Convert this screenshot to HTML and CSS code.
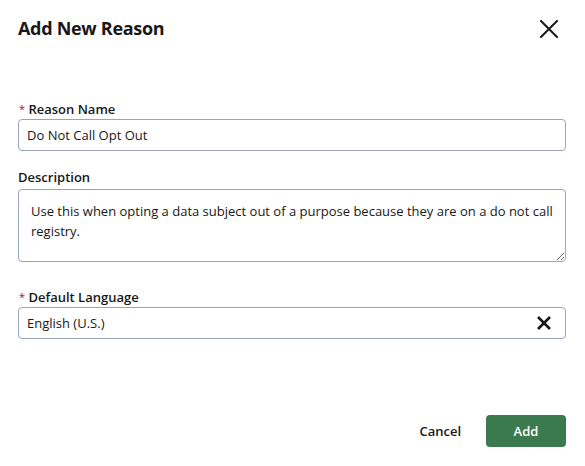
FILE: index.html
```html
<!DOCTYPE html>
<html lang="en">
<head>
<meta charset="utf-8">
<title>Add New Reason</title>
<link rel="stylesheet" href="styles.css">
</head>
<body>
<div class="modal">
  <header class="modal-header">
    <h1 class="modal-title">Add New Reason</h1>
    <button class="close-btn" type="button" aria-label="Close">
      <svg width="18" height="18" viewBox="0 0 18 18"><path d="M1 1L17 17M17 1L1 17" stroke="#181818" stroke-width="2" stroke-linecap="square" fill="none"/></svg>
    </button>
  </header>
  <form class="modal-body">
    <div class="field field-first">
      <label class="field-label"><abbr class="req">*</abbr> Reason Name</label>
      <div class="input-box">Do Not Call Opt Out</div>
    </div>
    <div class="field">
      <label class="field-label">Description</label>
      <textarea class="textarea">Use this when opting a data subject out of a purpose because they are on a do not call registry.</textarea>
    </div>
    <div class="field field-lang">
      <label class="field-label"><abbr class="req">*</abbr> Default Language</label>
      <div class="input-box input-pill">
        <span>English (U.S.)</span>
        <svg class="clear-icon" width="16" height="16" viewBox="0 0 16 16"><path d="M2 2L14 14M14 2L2 14" stroke="#181818" stroke-width="2.6" fill="none"/></svg>
      </div>
    </div>
  </form>
  <footer class="modal-footer">
    <button class="btn btn-neutral" type="button">Cancel</button>
    <button class="btn btn-brand" type="button">Add</button>
  </footer>
</div>
</body>
</html>
```
FILE: styles.css
```css
* { box-sizing: border-box; }
html, body { margin: 0; padding: 0; background: #fff; }
body {
  font-family: "Open Sans", "Liberation Sans", sans-serif;
  color: #181818;
  width: 585px;
  height: 466px;
  overflow: hidden;
}
.modal {
  padding: 0 19px 0 18px;
}
.modal-header {
  display: flex;
  justify-content: space-between;
  align-items: flex-start;
  padding-top: 16px;
}
.modal-title {
  margin: 0;
  font-size: 18px;
  line-height: 24px;
  font-weight: 700;
  letter-spacing: -0.3px;
}
.close-btn {
  border: 0;
  background: none;
  padding: 0;
  margin: 4px 8px 0 0;
  width: 18px;
  height: 18px;
  display: block;
}
.close-btn svg { display: block; }
.modal-body {
  margin: 0;
  padding-top: 60px;
}
.field { margin-top: 17px; }
.field-first { margin-top: 0; }
.field-lang { margin-top: 26px; }
.field-label {
  display: block;
  font-size: 13px;
  line-height: 18px;
  font-weight: 600;
  margin-bottom: 1px;
}
.req {
  color: #ba0517;
  text-decoration: none;
  font-weight: 400;
  font-size: 11px;
  vertical-align: 1px;
  border: 0;
  margin-left: 1px;
}
.input-box {
  height: 32px;
  border: 1px solid #97a6bd;
  border-radius: 4px;
  padding: 0 12px 0 8px;
  font-size: 13px;
  line-height: 30px;
  display: flex;
  align-items: center;
}
.input-pill { justify-content: space-between; }
.clear-icon { display: block; margin-right: 1px; }
.textarea {
  display: block;
  width: 100%;
  height: 73px;
  margin: 3px 0 0 0;
  border: 1px solid #97a6bd;
  border-radius: 4px;
  padding: 11px 12px 8px;
  font-family: inherit;
  font-size: 13px;
  line-height: 20px;
  color: #181818;
  resize: vertical;
}
.modal-footer {
  display: flex;
  justify-content: flex-end;
  align-items: center;
  gap: 25px;
  margin-top: 76px;
}
.btn {
  font-family: inherit;
  font-size: 13px;
  font-weight: 600;
  height: 32px;
  border-radius: 4px;
  border: 0;
  padding: 0;
}
.btn-neutral {
  background: none;
  color: #181818;
}
.btn-brand {
  width: 80px;
  background: #3b7a4e;
  color: #fff;
}
```
